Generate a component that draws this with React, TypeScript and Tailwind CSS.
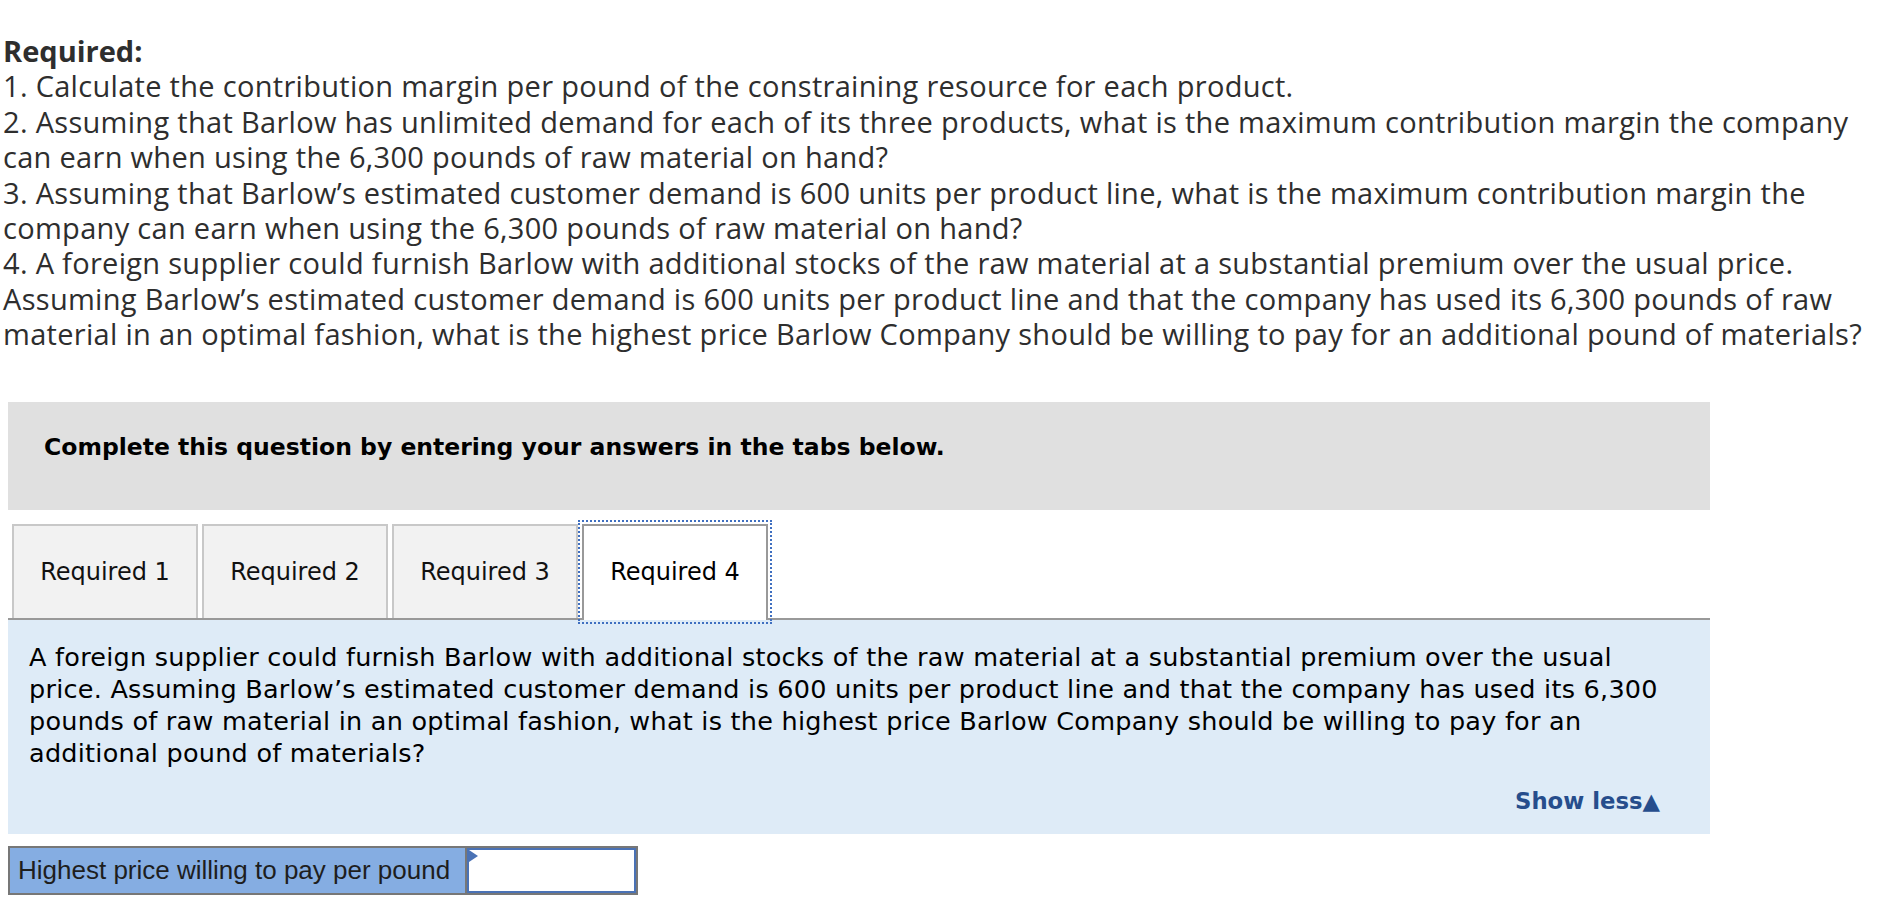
import React, { useState } from 'react';

const tabs = ['Required 1', 'Required 2', 'Required 3', 'Required 4'];

export default function App() {
  const [active, setActive] = useState(3);
  const [price, setPrice] = useState('');

  return (
    <div className="min-h-screen bg-white">
      {/* question text */}
      <div className="pt-[33px] pl-[3px] pr-[4px] font-['Open_Sans',sans-serif] text-[29px] leading-[35.4px] tracking-[0.3px] text-[#2e2e2e]">
        <p className="font-bold tracking-normal">Required:</p>
        <p>1. Calculate the contribution margin per pound of the constraining resource for each product.</p>
        <p>
          2. Assuming that Barlow has unlimited demand for each of its three products, what is the maximum contribution margin the company
          <br />
          can earn when using the 6,300 pounds of raw material on hand?
        </p>
        <p>
          3. Assuming that Barlow’s estimated customer demand is 600 units per product line, what is the maximum contribution margin the
          <br />
          company can earn when using the 6,300 pounds of raw material on hand?
        </p>
        <p>
          4. A foreign supplier could furnish Barlow with additional stocks of the raw material at a substantial premium over the usual price.
          <br />
          Assuming Barlow’s estimated customer demand is 600 units per product line and that the company has used its 6,300 pounds of raw
          <br />
          material in an optimal fashion, what is the highest price Barlow Company should be willing to pay for an additional pound of materials?
        </p>
      </div>

      <div className="ml-[8px] mt-[50px] w-[1702px] font-['DejaVu_Sans',sans-serif] text-[#111]">
        <div className="h-[108px] bg-[#e0e0e0] pl-[36px] pt-[31px]">
          <p className="text-[23.5px] font-bold leading-[28px] text-black">Complete this question by entering your answers in the tabs below.</p>
        </div>

        {/* tabs */}
        <div className="mt-[14px] flex items-end gap-[4px] pl-[4px] border-b-2 border-[#999]">
          {tabs.map((t, i) =>
            i === active ? (
              <button
                key={t}
                onClick={() => setActive(i)}
                className="relative -mb-[2px] flex h-[96px] w-[186px] items-center justify-center border-2 border-b-0 border-[#999] bg-white pb-[2px] text-[24px] text-black outline-2 outline-dotted outline-offset-[2px] outline-[#3f6fc0]"
              >
                {t}
              </button>
            ) : (
              <button
                key={t}
                onClick={() => setActive(i)}
                className="flex h-[94px] w-[186px] items-center justify-center border-2 border-b-0 border-[#c8c8c8] bg-[#f2f2f2] text-[24px] text-[#111]"
              >
                {t}
              </button>
            )
          )}
        </div>

        <div className="bg-[#deebf7] pl-[21px] pr-[10px] pt-[21px] pb-[18px]">
          <p className="text-[25.5px] leading-[32px] tracking-[0.25px] text-black">
            A foreign supplier could furnish Barlow with additional stocks of the raw material at a substantial premium over the usual
            <br />
            price. Assuming Barlow’s estimated customer demand is 600 units per product line and that the company has used its 6,300
            <br />
            pounds of raw material in an optimal fashion, what is the highest price Barlow Company should be willing to pay for an
            <br />
            additional pound of materials?
          </p>
          <div className="mt-[17px] flex justify-end pr-[40px]">
            <button className="text-[22.75px] font-bold leading-[30px] text-[#264d8c]">Show less▲</button>
          </div>
        </div>

        {/* answer row */}
        <div className="mt-[12px] flex h-[49px] w-[630px] border-2 border-[#777]">
          <div className="flex w-[457px] items-center border-r-2 border-[#777] bg-[#85ade2] pl-[8px] font-['Liberation_Sans',Arial,sans-serif] text-[26px] text-[#1e1e1e]">
            Highest price willing to pay per pound
          </div>
          <div className="relative flex-1">
            <input
              value={price}
              onChange={(e) => setPrice(e.target.value)}
              className="h-full w-full border-2 border-[#4a72b5] bg-white px-2 text-[22px] outline-none"
            />
            <svg className="absolute left-[2px] top-[2px]" width="10" height="13" viewBox="0 0 10 13">
              <path d="M0 0 L9 6 L0 12 Z" fill="#4a72b5" />
            </svg>
          </div>
        </div>
      </div>
    </div>
  );
}
